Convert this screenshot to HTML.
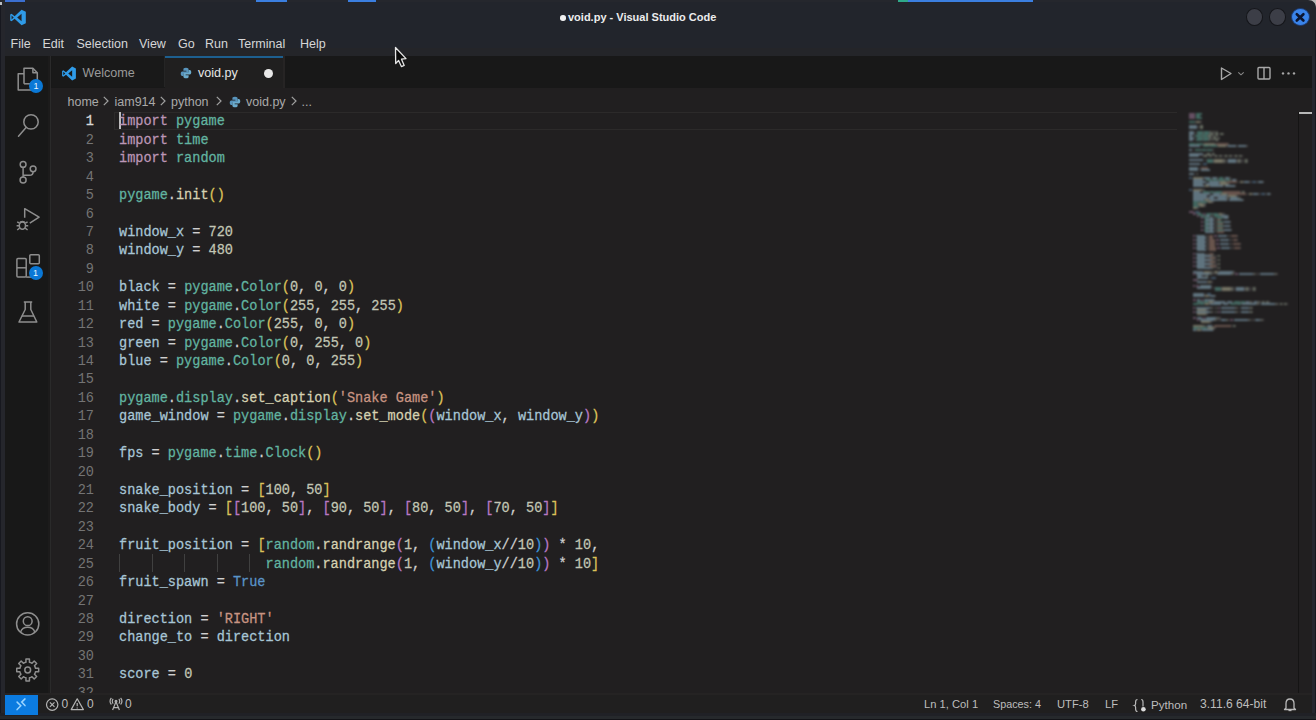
<!DOCTYPE html>
<html><head><meta charset="utf-8">
<style>
*{margin:0;padding:0;box-sizing:border-box}
html,body{width:1316px;height:720px;overflow:hidden;background:#1b1c22}
body{position:relative;font-family:"Liberation Sans",sans-serif;color:#ccc}
.abs{position:absolute}
.code{position:absolute;left:119px;font-family:"Liberation Mono",monospace;font-size:13.57px;white-space:pre;color:#cfcfcf;height:18.43px;line-height:18.43px;transform-origin:0 13px;transform:translateY(2.3px) scaleY(1.1);-webkit-text-stroke:0.25px currentColor}
.ln{position:absolute;left:56px;width:38px;text-align:right;font-family:"Liberation Mono",monospace;font-size:13.57px;color:#747474;height:18.43px;line-height:18.43px;transform-origin:0 13px;transform:translateY(2.3px) scaleY(1.1)}
.ln.cur{color:#d8d8d8;-webkit-text-stroke:0.3px currentColor}
.k{color:#bc96b6}.m{color:#62b4a0}.v{color:#a8c6d6}.n{color:#c2c6b4}.s{color:#c89482}.f{color:#d6d2b2}
.b1{color:#dcc25a}.b2{color:#b878c4}.b3{color:#3c94d8}.c{color:#5a94c8}
.mi{position:absolute;top:36px;font-size:12.5px;color:#d6d6d6;line-height:16px}
.bc{position:absolute;top:94px;font-size:12.5px;color:#a9a9a9;line-height:16px}
.st{position:absolute;top:697px;font-size:12px;color:#bdbdbd;line-height:15px}
.sep{position:absolute;top:93px;font-size:12.5px;color:#a9a9a9;line-height:16px}
</style></head><body>
<!-- desktop top strip -->
<div class="abs" style="left:0;top:0;width:1316px;height:2px;background:#25272d"></div>
<div class="abs" style="left:256px;top:0;width:31px;height:2px;background:#3b7fe0"></div><div class="abs" style="left:5px;top:0;width:20px;height:2px;background:#3b6fd0"></div>
<div class="abs" style="left:348px;top:0;width:28px;height:2px;background:#3b7fe0"></div>
<div class="abs" style="left:898px;top:0;width:10px;height:2px;background:#2fa98a"></div>
<div class="abs" style="left:908px;top:0;width:125px;height:2px;background:#3b7fe0"></div>

<!-- window titlebar + menubar -->
<div class="abs" style="left:0;top:2px;width:1316px;height:54px;background:#22252c"></div>
<div class="abs" style="left:0;top:48px;width:1316px;height:8px;background:#242529"></div>
<!-- left window border -->
<div class="abs" style="left:0;top:2px;width:1px;height:718px;background:#17181f"></div>
<div class="abs" style="left:1px;top:2px;width:4px;height:718px;background:#25262c"></div>
<!-- right window border -->
<div class="abs" style="left:1312px;top:56px;width:4px;height:664px;background:#25262e"></div><div class="abs" style="left:1314.5px;top:30px;width:1.5px;height:690px;background:#16171e"></div>

<!-- vscode logo -->
<svg class="abs" style="left:9px;top:9px" width="18" height="17" viewBox="0 0 100 100">
<path d="M71 4 L96 16 V84 L71 96 L30 58 L12 72 L4 67 V33 L12 28 L30 42 Z M71 28 L45 50 L71 72 Z M12 38 V62 L25 50 Z" fill="#2f9be8" fill-rule="evenodd"/>
</svg>
<div class="abs" style="left:560px;top:15px;width:5.5px;height:5.5px;border-radius:50%;background:#f0f0f0"></div>
<div class="abs" style="left:568px;top:10px;font-size:11px;font-weight:bold;color:#ececec;line-height:14px">void.py - Visual Studio Code</div>
<!-- window buttons -->
<div class="abs" style="left:1245.5px;top:8px;width:17px;height:17.5px;border-radius:50%;background:#3c3e47;border:1.6px solid #15161a"></div>
<div class="abs" style="left:1268.5px;top:8px;width:17px;height:17.5px;border-radius:50%;background:#3c3e47;border:1.6px solid #15161a"></div>
<div class="abs" style="left:1290.5px;top:7.8px;width:19.5px;height:18.5px;border-radius:50%;background:#3a84ea;border:1px solid #1c3a70"></div>
<svg class="abs" style="left:1290px;top:7px" width="20" height="20" viewBox="0 0 20 20"><path d="M6.8 7.2 L13.4 13.5 M13.4 7.2 L6.8 13.5" stroke="#0b1530" stroke-width="2.6" stroke-linecap="round"/></svg>
<svg class="abs" style="left:1306px;top:0" width="10" height="10" viewBox="0 0 10 10"><path d="M2 0 H10 V8 C10 3 7 0 2 0 Z" fill="#b8b8b8"/></svg>

<div class="mi" style="left:10.5px">File</div>
<div class="mi" style="left:42.5px">Edit</div>
<div class="mi" style="left:76.5px">Selection</div>
<div class="mi" style="left:139px">View</div>
<div class="mi" style="left:178px">Go</div>
<div class="mi" style="left:205px">Run</div>
<div class="mi" style="left:238px">Terminal</div>
<div class="mi" style="left:300px">Help</div>



<!-- activity bar -->
<div class="abs" style="left:5px;top:56px;width:43px;height:639px;background:#181818"></div>
<div class="abs" style="left:48px;top:56px;width:3px;height:639px;background:#1c1b1b"></div>
<div class="abs" style="left:50px;top:56px;width:1px;height:639px;background:#2a2a2a"></div>

<!-- explorer icon -->
<svg class="abs" style="left:14px;top:64px" width="30" height="30" viewBox="0 0 30 30" fill="none" stroke="#8e8e8e" stroke-width="1.5" stroke-linejoin="round">
<path d="M10 19.8 V4.2 H18.9 L23.3 8.7 V17"/><path d="M18.9 4.2 V8.7 H23.3"/><path d="M10 9.8 H4.2 V26 H17"/><path d="M10 19.8 H16"/>
</svg>
<div class="abs" style="left:29px;top:79px;width:14px;height:14px;border-radius:50%;background:#0a78d6;color:#e8f4ff;font-size:9px;text-align:center;line-height:14px">1</div>
<!-- search icon -->
<svg class="abs" style="left:14px;top:108px" width="30" height="30" viewBox="0 0 30 30" fill="none" stroke="#8e8e8e" stroke-width="1.5">
<circle cx="17" cy="13.9" r="7.2"/><path d="M12.3 19.3 L4.5 28.2" stroke-linecap="round"/>
</svg>
<!-- source control icon -->
<svg class="abs" style="left:14px;top:156px" width="30" height="30" viewBox="0 0 30 30" fill="none" stroke="#8e8e8e" stroke-width="1.5">
<circle cx="9.1" cy="8.4" r="2.9"/><circle cx="9.1" cy="24" r="3"/><circle cx="19.1" cy="12.8" r="2.9"/><path d="M9.1 11.3 V21"/><path d="M19.1 15.7 V16 C19.1 18.2 17.8 19.3 15.5 19.3 H9.1"/>
</svg>
<!-- run & debug icon -->
<svg class="abs" style="left:14px;top:202px" width="30" height="30" viewBox="0 0 30 30" fill="none" stroke="#8e8e8e" stroke-width="1.5" stroke-linejoin="round">
<path d="M10.7 15.8 V6.7 L25.1 15.1 L15.8 21.1"/>
<ellipse cx="8.4" cy="23.6" rx="3.1" ry="3.6"/><path d="M5.8 20.5 C6.5 19 10.3 19 11 20.5"/>
<path d="M3.2 19.8 L5.5 21.2 M2.6 23.8 H5.2 M3.2 28 L5.6 26.2 M13.6 19.8 L11.3 21.2 M14.2 23.8 H11.6 M13.6 28 L11.2 26.2"/>
</svg>
<!-- extensions icon -->
<svg class="abs" style="left:14px;top:251px" width="30" height="30" viewBox="0 0 30 30" fill="none" stroke="#8e8e8e" stroke-width="1.5">
<rect x="2.9" y="7.4" width="9.3" height="18.7" rx="1"/><path d="M2.9 16.8 H12.2"/><path d="M12.2 26.1 H17"/><rect x="15.8" y="3.7" width="9.5" height="9.1" rx="1"/>
</svg>
<div class="abs" style="left:28.6px;top:265.7px;width:14px;height:14px;border-radius:50%;background:#0a78d6;color:#e8f4ff;font-size:9px;text-align:center;line-height:14px">1</div>
<!-- testing flask icon -->
<svg class="abs" style="left:14px;top:297px" width="30" height="30" viewBox="0 0 30 30" fill="none" stroke="#8e8e8e" stroke-width="1.5" stroke-linejoin="round">
<path d="M9.8 5 H18.2"/><path d="M11.2 5 V12.5 L5 25 H22.8 L16.8 12.5 V5"/><path d="M7.8 19 H20"/>
</svg>
<!-- account icon -->
<svg class="abs" style="left:13px;top:609px" width="30" height="30" viewBox="0 0 30 30" fill="none" stroke="#8e8e8e" stroke-width="1.5">
<circle cx="14.7" cy="14.9" r="11.1"/><circle cx="14.7" cy="12.2" r="4.4"/><path d="M7.6 23 C8.8 19.4 11.5 18.3 14.7 18.3 C17.9 18.3 20.6 19.4 21.8 23"/>
</svg>
<!-- settings gear icon -->
<svg class="abs" style="left:13px;top:655px" width="30" height="30" viewBox="0 0 30 30" fill="none" stroke="#8e8e8e" stroke-width="1.5">
<path d="M22.09 11.94 L22.51 13.25 L25.66 13.26 L25.66 16.74 L22.51 16.75 L22.09 18.06 L21.45 19.29 L23.68 21.52 L21.22 23.98 L18.99 21.75 L17.76 22.39 L16.45 22.81 L16.44 25.96 L12.96 25.96 L12.95 22.81 L11.64 22.39 L10.41 21.75 L8.18 23.98 L5.72 21.52 L7.95 19.29 L7.31 18.06 L6.89 16.75 L3.74 16.74 L3.74 13.26 L6.89 13.25 L7.31 11.94 L7.95 10.71 L5.72 8.48 L8.18 6.02 L10.41 8.25 L11.64 7.61 L12.95 7.19 L12.96 4.04 L16.44 4.04 L16.45 7.19 L17.76 7.61 L18.99 8.25 L21.22 6.02 L23.68 8.48 L21.45 10.71 Z" stroke-linejoin="round"/>
<circle cx="14.7" cy="15" r="2.9"/>
</svg>

<!-- tab bar -->
<div class="abs" style="left:51px;top:56px;width:1261px;height:32px;background:#181818"></div>

<!-- welcome tab -->
<div class="abs" style="left:52px;top:56px;width:113px;height:31px;background:#191919;border-right:1px solid #252525"></div>
<svg class="abs" style="left:61px;top:66px" width="16" height="15" viewBox="0 0 100 100">
<path d="M71 4 L96 16 V84 L71 96 L30 58 L12 72 L4 67 V33 L12 28 L30 42 Z M71 28 L45 50 L71 72 Z M12 38 V62 L25 50 Z" fill="#2f9be8" fill-rule="evenodd"/>
</svg>
<div class="abs" style="left:82.5px;top:65px;font-size:12.6px;color:#9a9a9a;line-height:16px">Welcome</div>
<!-- void.py tab (active) -->
<div class="abs" style="left:165px;top:56px;width:120px;height:32px;background:#201f1f;border-right:2px solid #262424"></div>
<div class="abs" style="left:165px;top:56px;width:118px;height:1.5px;background:#1d5f8f"></div>
<svg class="abs" style="left:180px;top:67px" width="12" height="12" viewBox="0 0 16 16">
<path d="M8 1 C5 1 4.5 2 4.5 3.5 V5 H8.5 V6 H3 C1.5 6 1 7.5 1 9 C1 10.5 1.5 12 3 12 H4.5 V10 C4.5 8.8 5.3 8 6.5 8 H10 C11 8 11.5 7.3 11.5 6.5 V3.5 C11.5 2 10.5 1 8 1 Z" fill="#5894bc"/>
<path d="M8 15 C11 15 11.5 14 11.5 12.5 V11 H7.5 V10 H13 C14.5 10 15 8.5 15 7 C15 5.5 14.5 4 13 4 H11.5 V6 C11.5 7.2 10.7 8 9.5 8 H6 C5 8 4.5 8.7 4.5 9.5 V12.5 C4.5 14 5.5 15 8 15 Z" fill="#6cabcc"/>
</svg>
<div class="abs" style="left:198px;top:65px;font-size:12.6px;color:#e6e6e6;line-height:16px">void.py</div>
<div class="abs" style="left:263.5px;top:68.5px;width:9px;height:9px;border-radius:50%;background:#e8e8e8"></div>

<!-- editor actions -->
<svg class="abs" style="left:1216px;top:64px" width="90" height="20" viewBox="0 0 90 20" fill="none" stroke="#a8a8a8" stroke-width="1.4">
<path d="M5.5 4 L15 9.5 L5.5 15.5 Z" stroke-linejoin="round"/>
<path d="M22.3 8.3 L25 10.8 L27.7 8.3" stroke-width="1.1" stroke="#8a8a8a"/>
<rect x="42" y="3.5" width="12" height="11.5" rx="1"/><path d="M48 3.5 V15"/>
<circle cx="67" cy="9.4" r="1.2" fill="#a8a8a8" stroke="none"/><circle cx="72.5" cy="9.4" r="1.2" fill="#a8a8a8" stroke="none"/><circle cx="78" cy="9.4" r="1.2" fill="#a8a8a8" stroke="none"/>
</svg>

<!-- editor -->
<div class="abs" style="left:51px;top:88px;width:1261px;height:607px;background:#211f20"></div>
<!-- breadcrumbs -->
<div class="bc" style="left:67.5px">home</div>
<svg class="abs" style="left:102px;top:95px" width="8" height="12" viewBox="0 0 8 12" fill="none" stroke="#a0a0a0" stroke-width="1.2"><path d="M1.8 1.8 L6 6 L1.8 10.2"/></svg>
<div class="bc" style="left:114.5px">iam914</div>
<svg class="abs" style="left:159px;top:95px" width="8" height="12" viewBox="0 0 8 12" fill="none" stroke="#a0a0a0" stroke-width="1.2"><path d="M1.8 1.8 L6 6 L1.8 10.2"/></svg>
<div class="bc" style="left:171px">python</div>
<svg class="abs" style="left:215px;top:95px" width="8" height="12" viewBox="0 0 8 12" fill="none" stroke="#a0a0a0" stroke-width="1.2"><path d="M1.8 1.8 L6 6 L1.8 10.2"/></svg>
<svg class="abs" style="left:229px;top:95.5px" width="12" height="12" viewBox="0 0 16 16">
<path d="M8 1 C5 1 4.5 2 4.5 3.5 V5 H8.5 V6 H3 C1.5 6 1 7.5 1 9 C1 10.5 1.5 12 3 12 H4.5 V10 C4.5 8.8 5.3 8 6.5 8 H10 C11 8 11.5 7.3 11.5 6.5 V3.5 C11.5 2 10.5 1 8 1 Z" fill="#5894bc"/>
<path d="M8 15 C11 15 11.5 14 11.5 12.5 V11 H7.5 V10 H13 C14.5 10 15 8.5 15 7 C15 5.5 14.5 4 13 4 H11.5 V6 C11.5 7.2 10.7 8 9.5 8 H6 C5 8 4.5 8.7 4.5 9.5 V12.5 C4.5 14 5.5 15 8 15 Z" fill="#6cabcc"/>
</svg>
<div class="bc" style="left:246px">void.py</div>
<svg class="abs" style="left:290px;top:95px" width="8" height="12" viewBox="0 0 8 12" fill="none" stroke="#a0a0a0" stroke-width="1.2"><path d="M1.8 1.8 L6 6 L1.8 10.2"/></svg>
<div class="bc" style="left:301.5px">...</div>

<!-- current line border -->
<div class="abs" style="left:114px;top:111.5px;width:1063px;height:18.5px;border:1px solid #2c2a2a;border-right:none"></div>
<!-- cursor -->
<div class="abs" style="left:119px;top:112px;width:2px;height:17px;background:#bdbdbd"></div>

<div class="ln cur" style="top:111.40px">1</div>
<div class="code" style="top:111.40px"><span class="k">import</span> <span class="m">pygame</span></div>
<div class="ln" style="top:129.83px">2</div>
<div class="code" style="top:129.83px"><span class="k">import</span> <span class="m">time</span></div>
<div class="ln" style="top:148.26px">3</div>
<div class="code" style="top:148.26px"><span class="k">import</span> <span class="m">random</span></div>
<div class="ln" style="top:166.69px">4</div>
<div class="ln" style="top:185.12px">5</div>
<div class="code" style="top:185.12px"><span class="m">pygame</span>.<span class="f">init</span><span class="b1">()</span></div>
<div class="ln" style="top:203.55px">6</div>
<div class="ln" style="top:221.98px">7</div>
<div class="code" style="top:221.98px"><span class="v">window_x</span> = <span class="n">720</span></div>
<div class="ln" style="top:240.41px">8</div>
<div class="code" style="top:240.41px"><span class="v">window_y</span> = <span class="n">480</span></div>
<div class="ln" style="top:258.84px">9</div>
<div class="ln" style="top:277.27px">10</div>
<div class="code" style="top:277.27px"><span class="v">black</span> = <span class="m">pygame</span>.<span class="m">Color</span><span class="b1">(</span><span class="n">0</span>, <span class="n">0</span>, <span class="n">0</span><span class="b1">)</span></div>
<div class="ln" style="top:295.70px">11</div>
<div class="code" style="top:295.70px"><span class="v">white</span> = <span class="m">pygame</span>.<span class="m">Color</span><span class="b1">(</span><span class="n">255</span>, <span class="n">255</span>, <span class="n">255</span><span class="b1">)</span></div>
<div class="ln" style="top:314.13px">12</div>
<div class="code" style="top:314.13px"><span class="v">red</span> = <span class="m">pygame</span>.<span class="m">Color</span><span class="b1">(</span><span class="n">255</span>, <span class="n">0</span>, <span class="n">0</span><span class="b1">)</span></div>
<div class="ln" style="top:332.56px">13</div>
<div class="code" style="top:332.56px"><span class="v">green</span> = <span class="m">pygame</span>.<span class="m">Color</span><span class="b1">(</span><span class="n">0</span>, <span class="n">255</span>, <span class="n">0</span><span class="b1">)</span></div>
<div class="ln" style="top:350.99px">14</div>
<div class="code" style="top:350.99px"><span class="v">blue</span> = <span class="m">pygame</span>.<span class="m">Color</span><span class="b1">(</span><span class="n">0</span>, <span class="n">0</span>, <span class="n">255</span><span class="b1">)</span></div>
<div class="ln" style="top:369.42px">15</div>
<div class="ln" style="top:387.85px">16</div>
<div class="code" style="top:387.85px"><span class="m">pygame</span>.<span class="m">display</span>.<span class="f">set_caption</span><span class="b1">(</span><span class="s">&#x27;Snake Game&#x27;</span><span class="b1">)</span></div>
<div class="ln" style="top:406.28px">17</div>
<div class="code" style="top:406.28px"><span class="v">game_window</span> = <span class="m">pygame</span>.<span class="m">display</span>.<span class="f">set_mode</span><span class="b1">(</span><span class="b2">(</span><span class="v">window_x</span>, <span class="v">window_y</span><span class="b2">)</span><span class="b1">)</span></div>
<div class="ln" style="top:424.71px">18</div>
<div class="ln" style="top:443.14px">19</div>
<div class="code" style="top:443.14px"><span class="v">fps</span> = <span class="m">pygame</span>.<span class="m">time</span>.<span class="m">Clock</span><span class="b1">()</span></div>
<div class="ln" style="top:461.57px">20</div>
<div class="ln" style="top:480.00px">21</div>
<div class="code" style="top:480.00px"><span class="v">snake_position</span> = <span class="b1">[</span><span class="n">100</span>, <span class="n">50</span><span class="b1">]</span></div>
<div class="ln" style="top:498.43px">22</div>
<div class="code" style="top:498.43px"><span class="v">snake_body</span> = <span class="b1">[</span><span class="b2">[</span><span class="n">100</span>, <span class="n">50</span><span class="b2">]</span>, <span class="b2">[</span><span class="n">90</span>, <span class="n">50</span><span class="b2">]</span>, <span class="b2">[</span><span class="n">80</span>, <span class="n">50</span><span class="b2">]</span>, <span class="b2">[</span><span class="n">70</span>, <span class="n">50</span><span class="b2">]</span><span class="b1">]</span></div>
<div class="ln" style="top:516.86px">23</div>
<div class="ln" style="top:535.29px">24</div>
<div class="code" style="top:535.29px"><span class="v">fruit_position</span> = <span class="b1">[</span><span class="m">random</span>.<span class="f">randrange</span><span class="b2">(</span><span class="n">1</span>, <span class="b3">(</span><span class="v">window_x</span>//<span class="n">10</span><span class="b3">)</span><span class="b2">)</span> * <span class="n">10</span>,</div>
<div class="ln" style="top:553.72px">25</div>
<div class="code" style="top:553.72px">                  <span class="m">random</span>.<span class="f">randrange</span><span class="b2">(</span><span class="n">1</span>, <span class="b3">(</span><span class="v">window_y</span>//<span class="n">10</span><span class="b3">)</span><span class="b2">)</span> * <span class="n">10</span><span class="b1">]</span></div>
<div class="ln" style="top:572.15px">26</div>
<div class="code" style="top:572.15px"><span class="v">fruit_spawn</span> = <span class="c">True</span></div>
<div class="ln" style="top:590.58px">27</div>
<div class="ln" style="top:609.01px">28</div>
<div class="code" style="top:609.01px"><span class="v">direction</span> = <span class="s">&#x27;RIGHT&#x27;</span></div>
<div class="ln" style="top:627.44px">29</div>
<div class="code" style="top:627.44px"><span class="v">change_to</span> = <span class="v">direction</span></div>
<div class="ln" style="top:645.87px">30</div>
<div class="ln" style="top:664.30px">31</div>
<div class="code" style="top:664.30px"><span class="v">score</span> = <span class="n">0</span></div>
<div class="ln" style="top:682.73px">32</div><div class="abs" style="left:119.0px;top:553.7px;width:1px;height:18.4px;background:#404040"></div><div class="abs" style="left:151.6px;top:553.7px;width:1px;height:18.4px;background:#404040"></div><div class="abs" style="left:184.1px;top:553.7px;width:1px;height:18.4px;background:#404040"></div><div class="abs" style="left:216.7px;top:553.7px;width:1px;height:18.4px;background:#404040"></div><div class="abs" style="left:249.2px;top:553.7px;width:1px;height:18.4px;background:#404040"></div>

<div class="abs" style="left:1189px;top:112.5px;width:108px;height:232px;opacity:0.45;filter:blur(0.8px) saturate(0.7)"><svg width="108" height="232" viewBox="0 0 108 232"><rect x="0" y="0" width="6" height="2" fill="#c586c0"/><rect x="7" y="0" width="6" height="2" fill="#4ec9b0"/><rect x="0" y="2" width="6" height="2" fill="#c586c0"/><rect x="7" y="2" width="4" height="2" fill="#4ec9b0"/><rect x="0" y="4" width="6" height="2" fill="#c586c0"/><rect x="7" y="4" width="6" height="2" fill="#4ec9b0"/><rect x="0" y="8" width="6" height="2" fill="#4ec9b0"/><rect x="6.25" y="8" width="0.5" height="2" fill="#d4d4d4"/><rect x="7" y="8" width="4" height="2" fill="#dcdcaa"/><rect x="11.25" y="8" width="0.5" height="2" fill="#d4d4d4"/><rect x="12.25" y="8" width="0.5" height="2" fill="#d4d4d4"/><rect x="0" y="12" width="8" height="2" fill="#9cdcfe"/><rect x="9.25" y="12" width="0.5" height="2" fill="#d4d4d4"/><rect x="11" y="12" width="3" height="2" fill="#b5cea8"/><rect x="0" y="14" width="8" height="2" fill="#9cdcfe"/><rect x="9.25" y="14" width="0.5" height="2" fill="#d4d4d4"/><rect x="11" y="14" width="3" height="2" fill="#b5cea8"/><rect x="0" y="18" width="5" height="2" fill="#9cdcfe"/><rect x="6.25" y="18" width="0.5" height="2" fill="#d4d4d4"/><rect x="8" y="18" width="6" height="2" fill="#4ec9b0"/><rect x="14.25" y="18" width="0.5" height="2" fill="#d4d4d4"/><rect x="15" y="18" width="5" height="2" fill="#4ec9b0"/><rect x="20.25" y="18" width="0.5" height="2" fill="#d4d4d4"/><rect x="21" y="18" width="1" height="2" fill="#b5cea8"/><rect x="22.25" y="18" width="0.5" height="2" fill="#d4d4d4"/><rect x="24" y="18" width="1" height="2" fill="#b5cea8"/><rect x="25.25" y="18" width="0.5" height="2" fill="#d4d4d4"/><rect x="27" y="18" width="1" height="2" fill="#b5cea8"/><rect x="28.25" y="18" width="0.5" height="2" fill="#d4d4d4"/><rect x="0" y="20" width="5" height="2" fill="#9cdcfe"/><rect x="6.25" y="20" width="0.5" height="2" fill="#d4d4d4"/><rect x="8" y="20" width="6" height="2" fill="#4ec9b0"/><rect x="14.25" y="20" width="0.5" height="2" fill="#d4d4d4"/><rect x="15" y="20" width="5" height="2" fill="#4ec9b0"/><rect x="20.25" y="20" width="0.5" height="2" fill="#d4d4d4"/><rect x="21" y="20" width="3" height="2" fill="#b5cea8"/><rect x="24.25" y="20" width="0.5" height="2" fill="#d4d4d4"/><rect x="26" y="20" width="3" height="2" fill="#b5cea8"/><rect x="29.25" y="20" width="0.5" height="2" fill="#d4d4d4"/><rect x="31" y="20" width="3" height="2" fill="#b5cea8"/><rect x="34.25" y="20" width="0.5" height="2" fill="#d4d4d4"/><rect x="0" y="22" width="3" height="2" fill="#9cdcfe"/><rect x="4.25" y="22" width="0.5" height="2" fill="#d4d4d4"/><rect x="6" y="22" width="6" height="2" fill="#4ec9b0"/><rect x="12.25" y="22" width="0.5" height="2" fill="#d4d4d4"/><rect x="13" y="22" width="5" height="2" fill="#4ec9b0"/><rect x="18.25" y="22" width="0.5" height="2" fill="#d4d4d4"/><rect x="19" y="22" width="3" height="2" fill="#b5cea8"/><rect x="22.25" y="22" width="0.5" height="2" fill="#d4d4d4"/><rect x="24" y="22" width="1" height="2" fill="#b5cea8"/><rect x="25.25" y="22" width="0.5" height="2" fill="#d4d4d4"/><rect x="27" y="22" width="1" height="2" fill="#b5cea8"/><rect x="28.25" y="22" width="0.5" height="2" fill="#d4d4d4"/><rect x="0" y="24" width="5" height="2" fill="#9cdcfe"/><rect x="6.25" y="24" width="0.5" height="2" fill="#d4d4d4"/><rect x="8" y="24" width="6" height="2" fill="#4ec9b0"/><rect x="14.25" y="24" width="0.5" height="2" fill="#d4d4d4"/><rect x="15" y="24" width="5" height="2" fill="#4ec9b0"/><rect x="20.25" y="24" width="0.5" height="2" fill="#d4d4d4"/><rect x="21" y="24" width="1" height="2" fill="#b5cea8"/><rect x="22.25" y="24" width="0.5" height="2" fill="#d4d4d4"/><rect x="24" y="24" width="3" height="2" fill="#b5cea8"/><rect x="27.25" y="24" width="0.5" height="2" fill="#d4d4d4"/><rect x="29" y="24" width="1" height="2" fill="#b5cea8"/><rect x="30.25" y="24" width="0.5" height="2" fill="#d4d4d4"/><rect x="0" y="26" width="4" height="2" fill="#9cdcfe"/><rect x="5.25" y="26" width="0.5" height="2" fill="#d4d4d4"/><rect x="7" y="26" width="6" height="2" fill="#4ec9b0"/><rect x="13.25" y="26" width="0.5" height="2" fill="#d4d4d4"/><rect x="14" y="26" width="5" height="2" fill="#4ec9b0"/><rect x="19.25" y="26" width="0.5" height="2" fill="#d4d4d4"/><rect x="20" y="26" width="1" height="2" fill="#b5cea8"/><rect x="21.25" y="26" width="0.5" height="2" fill="#d4d4d4"/><rect x="23" y="26" width="1" height="2" fill="#b5cea8"/><rect x="24.25" y="26" width="0.5" height="2" fill="#d4d4d4"/><rect x="26" y="26" width="3" height="2" fill="#b5cea8"/><rect x="29.25" y="26" width="0.5" height="2" fill="#d4d4d4"/><rect x="0" y="30" width="6" height="2" fill="#4ec9b0"/><rect x="6.25" y="30" width="0.5" height="2" fill="#d4d4d4"/><rect x="7" y="30" width="7" height="2" fill="#4ec9b0"/><rect x="14.25" y="30" width="0.5" height="2" fill="#d4d4d4"/><rect x="15" y="30" width="11" height="2" fill="#dcdcaa"/><rect x="26.25" y="30" width="0.5" height="2" fill="#d4d4d4"/><rect x="27" y="30" width="12" height="2" fill="#ce9178"/><rect x="39.25" y="30" width="0.5" height="2" fill="#d4d4d4"/><rect x="0" y="32" width="11" height="2" fill="#9cdcfe"/><rect x="12.25" y="32" width="0.5" height="2" fill="#d4d4d4"/><rect x="14" y="32" width="6" height="2" fill="#4ec9b0"/><rect x="20.25" y="32" width="0.5" height="2" fill="#d4d4d4"/><rect x="21" y="32" width="7" height="2" fill="#4ec9b0"/><rect x="28.25" y="32" width="0.5" height="2" fill="#d4d4d4"/><rect x="29" y="32" width="8" height="2" fill="#dcdcaa"/><rect x="37.25" y="32" width="0.5" height="2" fill="#d4d4d4"/><rect x="38.25" y="32" width="0.5" height="2" fill="#d4d4d4"/><rect x="39" y="32" width="8" height="2" fill="#9cdcfe"/><rect x="47.25" y="32" width="0.5" height="2" fill="#d4d4d4"/><rect x="49" y="32" width="8" height="2" fill="#9cdcfe"/><rect x="57.25" y="32" width="0.5" height="2" fill="#d4d4d4"/><rect x="58.25" y="32" width="0.5" height="2" fill="#d4d4d4"/><rect x="0" y="36" width="3" height="2" fill="#9cdcfe"/><rect x="4.25" y="36" width="0.5" height="2" fill="#d4d4d4"/><rect x="6" y="36" width="6" height="2" fill="#4ec9b0"/><rect x="12.25" y="36" width="0.5" height="2" fill="#d4d4d4"/><rect x="13" y="36" width="4" height="2" fill="#4ec9b0"/><rect x="17.25" y="36" width="0.5" height="2" fill="#d4d4d4"/><rect x="18" y="36" width="5" height="2" fill="#4ec9b0"/><rect x="23.25" y="36" width="0.5" height="2" fill="#d4d4d4"/><rect x="24.25" y="36" width="0.5" height="2" fill="#d4d4d4"/><rect x="0" y="40" width="14" height="2" fill="#9cdcfe"/><rect x="15.25" y="40" width="0.5" height="2" fill="#d4d4d4"/><rect x="17.25" y="40" width="0.5" height="2" fill="#d4d4d4"/><rect x="18" y="40" width="3" height="2" fill="#b5cea8"/><rect x="21.25" y="40" width="0.5" height="2" fill="#d4d4d4"/><rect x="23" y="40" width="2" height="2" fill="#b5cea8"/><rect x="25.25" y="40" width="0.5" height="2" fill="#d4d4d4"/><rect x="0" y="42" width="10" height="2" fill="#9cdcfe"/><rect x="11.25" y="42" width="0.5" height="2" fill="#d4d4d4"/><rect x="13.25" y="42" width="0.5" height="2" fill="#d4d4d4"/><rect x="14.25" y="42" width="0.5" height="2" fill="#d4d4d4"/><rect x="15" y="42" width="3" height="2" fill="#b5cea8"/><rect x="18.25" y="42" width="0.5" height="2" fill="#d4d4d4"/><rect x="20" y="42" width="2" height="2" fill="#b5cea8"/><rect x="22.25" y="42" width="0.5" height="2" fill="#d4d4d4"/><rect x="23.25" y="42" width="0.5" height="2" fill="#d4d4d4"/><rect x="25.25" y="42" width="0.5" height="2" fill="#d4d4d4"/><rect x="26" y="42" width="2" height="2" fill="#b5cea8"/><rect x="28.25" y="42" width="0.5" height="2" fill="#d4d4d4"/><rect x="30" y="42" width="2" height="2" fill="#b5cea8"/><rect x="32.25" y="42" width="0.5" height="2" fill="#d4d4d4"/><rect x="33.25" y="42" width="0.5" height="2" fill="#d4d4d4"/><rect x="35.25" y="42" width="0.5" height="2" fill="#d4d4d4"/><rect x="36" y="42" width="2" height="2" fill="#b5cea8"/><rect x="38.25" y="42" width="0.5" height="2" fill="#d4d4d4"/><rect x="40" y="42" width="2" height="2" fill="#b5cea8"/><rect x="42.25" y="42" width="0.5" height="2" fill="#d4d4d4"/><rect x="43.25" y="42" width="0.5" height="2" fill="#d4d4d4"/><rect x="45.25" y="42" width="0.5" height="2" fill="#d4d4d4"/><rect x="46" y="42" width="2" height="2" fill="#b5cea8"/><rect x="48.25" y="42" width="0.5" height="2" fill="#d4d4d4"/><rect x="50" y="42" width="2" height="2" fill="#b5cea8"/><rect x="52.25" y="42" width="0.5" height="2" fill="#d4d4d4"/><rect x="53.25" y="42" width="0.5" height="2" fill="#d4d4d4"/><rect x="0" y="46" width="14" height="2" fill="#9cdcfe"/><rect x="15.25" y="46" width="0.5" height="2" fill="#d4d4d4"/><rect x="17.25" y="46" width="0.5" height="2" fill="#d4d4d4"/><rect x="18" y="46" width="6" height="2" fill="#4ec9b0"/><rect x="24.25" y="46" width="0.5" height="2" fill="#d4d4d4"/><rect x="25" y="46" width="9" height="2" fill="#dcdcaa"/><rect x="34.25" y="46" width="0.5" height="2" fill="#d4d4d4"/><rect x="35" y="46" width="1" height="2" fill="#b5cea8"/><rect x="36.25" y="46" width="0.5" height="2" fill="#d4d4d4"/><rect x="38.25" y="46" width="0.5" height="2" fill="#d4d4d4"/><rect x="39" y="46" width="8" height="2" fill="#9cdcfe"/><rect x="47.25" y="46" width="0.5" height="2" fill="#d4d4d4"/><rect x="48.25" y="46" width="0.5" height="2" fill="#d4d4d4"/><rect x="49" y="46" width="2" height="2" fill="#b5cea8"/><rect x="51.25" y="46" width="0.5" height="2" fill="#d4d4d4"/><rect x="52.25" y="46" width="0.5" height="2" fill="#d4d4d4"/><rect x="54.25" y="46" width="0.5" height="2" fill="#d4d4d4"/><rect x="56" y="46" width="2" height="2" fill="#b5cea8"/><rect x="58.25" y="46" width="0.5" height="2" fill="#d4d4d4"/><rect x="18" y="48" width="6" height="2" fill="#4ec9b0"/><rect x="24.25" y="48" width="0.5" height="2" fill="#d4d4d4"/><rect x="25" y="48" width="9" height="2" fill="#dcdcaa"/><rect x="34.25" y="48" width="0.5" height="2" fill="#d4d4d4"/><rect x="35" y="48" width="1" height="2" fill="#b5cea8"/><rect x="36.25" y="48" width="0.5" height="2" fill="#d4d4d4"/><rect x="38.25" y="48" width="0.5" height="2" fill="#d4d4d4"/><rect x="39" y="48" width="8" height="2" fill="#9cdcfe"/><rect x="47.25" y="48" width="0.5" height="2" fill="#d4d4d4"/><rect x="48.25" y="48" width="0.5" height="2" fill="#d4d4d4"/><rect x="49" y="48" width="2" height="2" fill="#b5cea8"/><rect x="51.25" y="48" width="0.5" height="2" fill="#d4d4d4"/><rect x="52.25" y="48" width="0.5" height="2" fill="#d4d4d4"/><rect x="54.25" y="48" width="0.5" height="2" fill="#d4d4d4"/><rect x="56" y="48" width="2" height="2" fill="#b5cea8"/><rect x="58.25" y="48" width="0.5" height="2" fill="#d4d4d4"/><rect x="0" y="50" width="11" height="2" fill="#9cdcfe"/><rect x="12.25" y="50" width="0.5" height="2" fill="#d4d4d4"/><rect x="14" y="50" width="4" height="2" fill="#569cd6"/><rect x="0" y="54" width="9" height="2" fill="#9cdcfe"/><rect x="10.25" y="54" width="0.5" height="2" fill="#d4d4d4"/><rect x="12" y="54" width="7" height="2" fill="#ce9178"/><rect x="0" y="56" width="9" height="2" fill="#9cdcfe"/><rect x="10.25" y="56" width="0.5" height="2" fill="#d4d4d4"/><rect x="12" y="56" width="9" height="2" fill="#9cdcfe"/><rect x="0" y="60" width="5" height="2" fill="#9cdcfe"/><rect x="6.25" y="60" width="0.5" height="2" fill="#d4d4d4"/><rect x="8" y="60" width="1" height="2" fill="#b5cea8"/><rect x="0" y="64" width="3" height="2" fill="#569cd6"/><rect x="4" y="64" width="10" height="2" fill="#dcdcaa"/><rect x="14.25" y="64" width="0.5" height="2" fill="#d4d4d4"/><rect x="15" y="64" width="6" height="2" fill="#9cdcfe"/><rect x="21.25" y="64" width="0.5" height="2" fill="#d4d4d4"/><rect x="23" y="64" width="5" height="2" fill="#9cdcfe"/><rect x="28.25" y="64" width="0.5" height="2" fill="#d4d4d4"/><rect x="30" y="64" width="4" height="2" fill="#4ec9b0"/><rect x="34.25" y="64" width="0.5" height="2" fill="#d4d4d4"/><rect x="36" y="64" width="4" height="2" fill="#9cdcfe"/><rect x="40.25" y="64" width="0.5" height="2" fill="#d4d4d4"/><rect x="41.25" y="64" width="0.5" height="2" fill="#d4d4d4"/><rect x="4" y="66" width="10" height="2" fill="#9cdcfe"/><rect x="15.25" y="66" width="0.5" height="2" fill="#d4d4d4"/><rect x="17" y="66" width="6" height="2" fill="#4ec9b0"/><rect x="23.25" y="66" width="0.5" height="2" fill="#d4d4d4"/><rect x="24" y="66" width="4" height="2" fill="#4ec9b0"/><rect x="28.25" y="66" width="0.5" height="2" fill="#d4d4d4"/><rect x="29" y="66" width="7" height="2" fill="#4ec9b0"/><rect x="36.25" y="66" width="0.5" height="2" fill="#d4d4d4"/><rect x="37" y="66" width="4" height="2" fill="#4ec9b0"/><rect x="41.25" y="66" width="0.5" height="2" fill="#d4d4d4"/><rect x="43" y="66" width="4" height="2" fill="#9cdcfe"/><rect x="47.25" y="66" width="0.5" height="2" fill="#d4d4d4"/><rect x="4" y="68" width="13" height="2" fill="#9cdcfe"/><rect x="18.25" y="68" width="0.5" height="2" fill="#d4d4d4"/><rect x="20" y="68" width="10" height="2" fill="#9cdcfe"/><rect x="30.25" y="68" width="0.5" height="2" fill="#d4d4d4"/><rect x="31" y="68" width="6" height="2" fill="#dcdcaa"/><rect x="37.25" y="68" width="0.5" height="2" fill="#d4d4d4"/><rect x="38" y="68" width="10" height="2" fill="#ce9178"/><rect x="49.25" y="68" width="0.5" height="2" fill="#d4d4d4"/><rect x="51" y="68" width="3" height="2" fill="#dcdcaa"/><rect x="54.25" y="68" width="0.5" height="2" fill="#d4d4d4"/><rect x="55" y="68" width="5" height="2" fill="#9cdcfe"/><rect x="60.25" y="68" width="0.5" height="2" fill="#d4d4d4"/><rect x="61.25" y="68" width="0.5" height="2" fill="#d4d4d4"/><rect x="63" y="68" width="4" height="2" fill="#569cd6"/><rect x="67.25" y="68" width="0.5" height="2" fill="#d4d4d4"/><rect x="69" y="68" width="5" height="2" fill="#9cdcfe"/><rect x="74.25" y="68" width="0.5" height="2" fill="#d4d4d4"/><rect x="4" y="70" width="10" height="2" fill="#9cdcfe"/><rect x="15.25" y="70" width="0.5" height="2" fill="#d4d4d4"/><rect x="17" y="70" width="13" height="2" fill="#9cdcfe"/><rect x="30.25" y="70" width="0.5" height="2" fill="#d4d4d4"/><rect x="31" y="70" width="8" height="2" fill="#dcdcaa"/><rect x="39.25" y="70" width="0.5" height="2" fill="#d4d4d4"/><rect x="40.25" y="70" width="0.5" height="2" fill="#d4d4d4"/><rect x="4" y="72" width="11" height="2" fill="#9cdcfe"/><rect x="15.25" y="72" width="0.5" height="2" fill="#d4d4d4"/><rect x="16" y="72" width="4" height="2" fill="#dcdcaa"/><rect x="20.25" y="72" width="0.5" height="2" fill="#d4d4d4"/><rect x="21" y="72" width="13" height="2" fill="#9cdcfe"/><rect x="34.25" y="72" width="0.5" height="2" fill="#d4d4d4"/><rect x="36" y="72" width="10" height="2" fill="#9cdcfe"/><rect x="46.25" y="72" width="0.5" height="2" fill="#d4d4d4"/><rect x="0" y="76" width="3" height="2" fill="#569cd6"/><rect x="4" y="76" width="9" height="2" fill="#dcdcaa"/><rect x="13.25" y="76" width="0.5" height="2" fill="#d4d4d4"/><rect x="14.25" y="76" width="0.5" height="2" fill="#d4d4d4"/><rect x="15.25" y="76" width="0.5" height="2" fill="#d4d4d4"/><rect x="4" y="78" width="7" height="2" fill="#9cdcfe"/><rect x="12.25" y="78" width="0.5" height="2" fill="#d4d4d4"/><rect x="14" y="78" width="6" height="2" fill="#4ec9b0"/><rect x="20.25" y="78" width="0.5" height="2" fill="#d4d4d4"/><rect x="21" y="78" width="4" height="2" fill="#4ec9b0"/><rect x="25.25" y="78" width="0.5" height="2" fill="#d4d4d4"/><rect x="26" y="78" width="7" height="2" fill="#4ec9b0"/><rect x="33.25" y="78" width="0.5" height="2" fill="#d4d4d4"/><rect x="34" y="78" width="17" height="2" fill="#ce9178"/><rect x="51.25" y="78" width="0.5" height="2" fill="#d4d4d4"/><rect x="53" y="78" width="2" height="2" fill="#b5cea8"/><rect x="55.25" y="78" width="0.5" height="2" fill="#d4d4d4"/><rect x="4" y="80" width="17" height="2" fill="#9cdcfe"/><rect x="22.25" y="80" width="0.5" height="2" fill="#d4d4d4"/><rect x="24" y="80" width="7" height="2" fill="#9cdcfe"/><rect x="31.25" y="80" width="0.5" height="2" fill="#d4d4d4"/><rect x="32" y="80" width="6" height="2" fill="#dcdcaa"/><rect x="38.25" y="80" width="0.5" height="2" fill="#d4d4d4"/><rect x="39" y="80" width="18" height="2" fill="#ce9178"/><rect x="58.25" y="80" width="0.5" height="2" fill="#d4d4d4"/><rect x="60" y="80" width="3" height="2" fill="#dcdcaa"/><rect x="63.25" y="80" width="0.5" height="2" fill="#d4d4d4"/><rect x="64" y="80" width="5" height="2" fill="#9cdcfe"/><rect x="69.25" y="80" width="0.5" height="2" fill="#d4d4d4"/><rect x="70.25" y="80" width="0.5" height="2" fill="#d4d4d4"/><rect x="72" y="80" width="4" height="2" fill="#569cd6"/><rect x="76.25" y="80" width="0.5" height="2" fill="#d4d4d4"/><rect x="78" y="80" width="3" height="2" fill="#9cdcfe"/><rect x="81.25" y="80" width="0.5" height="2" fill="#d4d4d4"/><rect x="4" y="82" width="14" height="2" fill="#9cdcfe"/><rect x="19.25" y="82" width="0.5" height="2" fill="#d4d4d4"/><rect x="21" y="82" width="17" height="2" fill="#9cdcfe"/><rect x="38.25" y="82" width="0.5" height="2" fill="#d4d4d4"/><rect x="39" y="82" width="8" height="2" fill="#dcdcaa"/><rect x="47.25" y="82" width="0.5" height="2" fill="#d4d4d4"/><rect x="48.25" y="82" width="0.5" height="2" fill="#d4d4d4"/><rect x="4" y="84" width="14" height="2" fill="#9cdcfe"/><rect x="18.25" y="84" width="0.5" height="2" fill="#d4d4d4"/><rect x="19" y="84" width="6" height="2" fill="#9cdcfe"/><rect x="26.25" y="84" width="0.5" height="2" fill="#d4d4d4"/><rect x="28.25" y="84" width="0.5" height="2" fill="#d4d4d4"/><rect x="29" y="84" width="8" height="2" fill="#9cdcfe"/><rect x="37.25" y="84" width="0.5" height="2" fill="#d4d4d4"/><rect x="38" y="84" width="1" height="2" fill="#b5cea8"/><rect x="39.25" y="84" width="0.5" height="2" fill="#d4d4d4"/><rect x="41" y="84" width="8" height="2" fill="#9cdcfe"/><rect x="49.25" y="84" width="0.5" height="2" fill="#d4d4d4"/><rect x="50" y="84" width="1" height="2" fill="#b5cea8"/><rect x="51.25" y="84" width="0.5" height="2" fill="#d4d4d4"/><rect x="4" y="86" width="11" height="2" fill="#9cdcfe"/><rect x="15.25" y="86" width="0.5" height="2" fill="#d4d4d4"/><rect x="16" y="86" width="4" height="2" fill="#dcdcaa"/><rect x="20.25" y="86" width="0.5" height="2" fill="#d4d4d4"/><rect x="21" y="86" width="17" height="2" fill="#9cdcfe"/><rect x="38.25" y="86" width="0.5" height="2" fill="#d4d4d4"/><rect x="40" y="86" width="14" height="2" fill="#9cdcfe"/><rect x="54.25" y="86" width="0.5" height="2" fill="#d4d4d4"/><rect x="4" y="88" width="6" height="2" fill="#4ec9b0"/><rect x="10.25" y="88" width="0.5" height="2" fill="#d4d4d4"/><rect x="11" y="88" width="7" height="2" fill="#4ec9b0"/><rect x="18.25" y="88" width="0.5" height="2" fill="#d4d4d4"/><rect x="19" y="88" width="4" height="2" fill="#dcdcaa"/><rect x="23.25" y="88" width="0.5" height="2" fill="#d4d4d4"/><rect x="24.25" y="88" width="0.5" height="2" fill="#d4d4d4"/><rect x="4" y="90" width="4" height="2" fill="#4ec9b0"/><rect x="8.25" y="90" width="0.5" height="2" fill="#d4d4d4"/><rect x="9" y="90" width="5" height="2" fill="#dcdcaa"/><rect x="14.25" y="90" width="0.5" height="2" fill="#d4d4d4"/><rect x="15" y="90" width="1" height="2" fill="#b5cea8"/><rect x="16.25" y="90" width="0.5" height="2" fill="#d4d4d4"/><rect x="4" y="92" width="6" height="2" fill="#4ec9b0"/><rect x="10.25" y="92" width="0.5" height="2" fill="#d4d4d4"/><rect x="11" y="92" width="4" height="2" fill="#dcdcaa"/><rect x="15.25" y="92" width="0.5" height="2" fill="#d4d4d4"/><rect x="16.25" y="92" width="0.5" height="2" fill="#d4d4d4"/><rect x="4" y="94" width="4" height="2" fill="#dcdcaa"/><rect x="8.25" y="94" width="0.5" height="2" fill="#d4d4d4"/><rect x="9.25" y="94" width="0.5" height="2" fill="#d4d4d4"/><rect x="0" y="98" width="5" height="2" fill="#c586c0"/><rect x="6" y="98" width="4" height="2" fill="#569cd6"/><rect x="10.25" y="98" width="0.5" height="2" fill="#d4d4d4"/><rect x="4" y="100" width="3" height="2" fill="#c586c0"/><rect x="8" y="100" width="5" height="2" fill="#4ec9b0"/><rect x="14" y="100" width="2" height="2" fill="#c586c0"/><rect x="17" y="100" width="6" height="2" fill="#4ec9b0"/><rect x="23.25" y="100" width="0.5" height="2" fill="#d4d4d4"/><rect x="24" y="100" width="5" height="2" fill="#4ec9b0"/><rect x="29.25" y="100" width="0.5" height="2" fill="#d4d4d4"/><rect x="30" y="100" width="3" height="2" fill="#dcdcaa"/><rect x="33.25" y="100" width="0.5" height="2" fill="#d4d4d4"/><rect x="34.25" y="100" width="0.5" height="2" fill="#d4d4d4"/><rect x="35.25" y="100" width="0.5" height="2" fill="#d4d4d4"/><rect x="8" y="102" width="2" height="2" fill="#c586c0"/><rect x="11" y="102" width="5" height="2" fill="#4ec9b0"/><rect x="16.25" y="102" width="0.5" height="2" fill="#d4d4d4"/><rect x="17" y="102" width="4" height="2" fill="#9cdcfe"/><rect x="22.25" y="102" width="0.5" height="2" fill="#d4d4d4"/><rect x="23.25" y="102" width="0.5" height="2" fill="#d4d4d4"/><rect x="25" y="102" width="6" height="2" fill="#4ec9b0"/><rect x="31.25" y="102" width="0.5" height="2" fill="#d4d4d4"/><rect x="32" y="102" width="7" height="2" fill="#9cdcfe"/><rect x="39.25" y="102" width="0.5" height="2" fill="#d4d4d4"/><rect x="12" y="104" width="2" height="2" fill="#c586c0"/><rect x="15" y="104" width="5" height="2" fill="#4ec9b0"/><rect x="20.25" y="104" width="0.5" height="2" fill="#d4d4d4"/><rect x="21" y="104" width="3" height="2" fill="#9cdcfe"/><rect x="25.25" y="104" width="0.5" height="2" fill="#d4d4d4"/><rect x="26.25" y="104" width="0.5" height="2" fill="#d4d4d4"/><rect x="28" y="104" width="6" height="2" fill="#4ec9b0"/><rect x="34.25" y="104" width="0.5" height="2" fill="#d4d4d4"/><rect x="35" y="104" width="4" height="2" fill="#9cdcfe"/><rect x="39.25" y="104" width="0.5" height="2" fill="#d4d4d4"/><rect x="16" y="106" width="9" height="2" fill="#9cdcfe"/><rect x="26.25" y="106" width="0.5" height="2" fill="#d4d4d4"/><rect x="28" y="106" width="4" height="2" fill="#ce9178"/><rect x="12" y="108" width="2" height="2" fill="#c586c0"/><rect x="15" y="108" width="5" height="2" fill="#4ec9b0"/><rect x="20.25" y="108" width="0.5" height="2" fill="#d4d4d4"/><rect x="21" y="108" width="3" height="2" fill="#9cdcfe"/><rect x="25.25" y="108" width="0.5" height="2" fill="#d4d4d4"/><rect x="26.25" y="108" width="0.5" height="2" fill="#d4d4d4"/><rect x="28" y="108" width="6" height="2" fill="#4ec9b0"/><rect x="34.25" y="108" width="0.5" height="2" fill="#d4d4d4"/><rect x="35" y="108" width="6" height="2" fill="#9cdcfe"/><rect x="41.25" y="108" width="0.5" height="2" fill="#d4d4d4"/><rect x="16" y="110" width="9" height="2" fill="#9cdcfe"/><rect x="26.25" y="110" width="0.5" height="2" fill="#d4d4d4"/><rect x="28" y="110" width="6" height="2" fill="#ce9178"/><rect x="12" y="112" width="2" height="2" fill="#c586c0"/><rect x="15" y="112" width="5" height="2" fill="#4ec9b0"/><rect x="20.25" y="112" width="0.5" height="2" fill="#d4d4d4"/><rect x="21" y="112" width="3" height="2" fill="#9cdcfe"/><rect x="25.25" y="112" width="0.5" height="2" fill="#d4d4d4"/><rect x="26.25" y="112" width="0.5" height="2" fill="#d4d4d4"/><rect x="28" y="112" width="6" height="2" fill="#4ec9b0"/><rect x="34.25" y="112" width="0.5" height="2" fill="#d4d4d4"/><rect x="35" y="112" width="6" height="2" fill="#9cdcfe"/><rect x="41.25" y="112" width="0.5" height="2" fill="#d4d4d4"/><rect x="16" y="114" width="9" height="2" fill="#9cdcfe"/><rect x="26.25" y="114" width="0.5" height="2" fill="#d4d4d4"/><rect x="28" y="114" width="6" height="2" fill="#ce9178"/><rect x="12" y="116" width="2" height="2" fill="#c586c0"/><rect x="15" y="116" width="5" height="2" fill="#4ec9b0"/><rect x="20.25" y="116" width="0.5" height="2" fill="#d4d4d4"/><rect x="21" y="116" width="3" height="2" fill="#9cdcfe"/><rect x="25.25" y="116" width="0.5" height="2" fill="#d4d4d4"/><rect x="26.25" y="116" width="0.5" height="2" fill="#d4d4d4"/><rect x="28" y="116" width="6" height="2" fill="#4ec9b0"/><rect x="34.25" y="116" width="0.5" height="2" fill="#d4d4d4"/><rect x="35" y="116" width="7" height="2" fill="#9cdcfe"/><rect x="42.25" y="116" width="0.5" height="2" fill="#d4d4d4"/><rect x="16" y="118" width="9" height="2" fill="#9cdcfe"/><rect x="26.25" y="118" width="0.5" height="2" fill="#d4d4d4"/><rect x="28" y="118" width="7" height="2" fill="#ce9178"/><rect x="4" y="122" width="2" height="2" fill="#c586c0"/><rect x="7" y="122" width="9" height="2" fill="#9cdcfe"/><rect x="17.25" y="122" width="0.5" height="2" fill="#d4d4d4"/><rect x="18.25" y="122" width="0.5" height="2" fill="#d4d4d4"/><rect x="20" y="122" width="4" height="2" fill="#ce9178"/><rect x="25" y="122" width="3" height="2" fill="#c586c0"/><rect x="29" y="122" width="9" height="2" fill="#9cdcfe"/><rect x="39.25" y="122" width="0.5" height="2" fill="#d4d4d4"/><rect x="40.25" y="122" width="0.5" height="2" fill="#d4d4d4"/><rect x="42" y="122" width="6" height="2" fill="#ce9178"/><rect x="48.25" y="122" width="0.5" height="2" fill="#d4d4d4"/><rect x="8" y="124" width="9" height="2" fill="#9cdcfe"/><rect x="18.25" y="124" width="0.5" height="2" fill="#d4d4d4"/><rect x="20" y="124" width="4" height="2" fill="#ce9178"/><rect x="4" y="126" width="2" height="2" fill="#c586c0"/><rect x="7" y="126" width="9" height="2" fill="#9cdcfe"/><rect x="17.25" y="126" width="0.5" height="2" fill="#d4d4d4"/><rect x="18.25" y="126" width="0.5" height="2" fill="#d4d4d4"/><rect x="20" y="126" width="6" height="2" fill="#ce9178"/><rect x="27" y="126" width="3" height="2" fill="#c586c0"/><rect x="31" y="126" width="9" height="2" fill="#9cdcfe"/><rect x="41.25" y="126" width="0.5" height="2" fill="#d4d4d4"/><rect x="42.25" y="126" width="0.5" height="2" fill="#d4d4d4"/><rect x="44" y="126" width="4" height="2" fill="#ce9178"/><rect x="48.25" y="126" width="0.5" height="2" fill="#d4d4d4"/><rect x="8" y="128" width="9" height="2" fill="#9cdcfe"/><rect x="18.25" y="128" width="0.5" height="2" fill="#d4d4d4"/><rect x="20" y="128" width="6" height="2" fill="#ce9178"/><rect x="4" y="130" width="2" height="2" fill="#c586c0"/><rect x="7" y="130" width="9" height="2" fill="#9cdcfe"/><rect x="17.25" y="130" width="0.5" height="2" fill="#d4d4d4"/><rect x="18.25" y="130" width="0.5" height="2" fill="#d4d4d4"/><rect x="20" y="130" width="6" height="2" fill="#ce9178"/><rect x="27" y="130" width="3" height="2" fill="#c586c0"/><rect x="31" y="130" width="9" height="2" fill="#9cdcfe"/><rect x="41.25" y="130" width="0.5" height="2" fill="#d4d4d4"/><rect x="42.25" y="130" width="0.5" height="2" fill="#d4d4d4"/><rect x="44" y="130" width="7" height="2" fill="#ce9178"/><rect x="51.25" y="130" width="0.5" height="2" fill="#d4d4d4"/><rect x="8" y="132" width="9" height="2" fill="#9cdcfe"/><rect x="18.25" y="132" width="0.5" height="2" fill="#d4d4d4"/><rect x="20" y="132" width="6" height="2" fill="#ce9178"/><rect x="4" y="134" width="2" height="2" fill="#c586c0"/><rect x="7" y="134" width="9" height="2" fill="#9cdcfe"/><rect x="17.25" y="134" width="0.5" height="2" fill="#d4d4d4"/><rect x="18.25" y="134" width="0.5" height="2" fill="#d4d4d4"/><rect x="20" y="134" width="7" height="2" fill="#ce9178"/><rect x="28" y="134" width="3" height="2" fill="#c586c0"/><rect x="32" y="134" width="9" height="2" fill="#9cdcfe"/><rect x="42.25" y="134" width="0.5" height="2" fill="#d4d4d4"/><rect x="43.25" y="134" width="0.5" height="2" fill="#d4d4d4"/><rect x="45" y="134" width="6" height="2" fill="#ce9178"/><rect x="51.25" y="134" width="0.5" height="2" fill="#d4d4d4"/><rect x="8" y="136" width="9" height="2" fill="#9cdcfe"/><rect x="18.25" y="136" width="0.5" height="2" fill="#d4d4d4"/><rect x="20" y="136" width="7" height="2" fill="#ce9178"/><rect x="4" y="140" width="2" height="2" fill="#c586c0"/><rect x="7" y="140" width="9" height="2" fill="#9cdcfe"/><rect x="17.25" y="140" width="0.5" height="2" fill="#d4d4d4"/><rect x="18.25" y="140" width="0.5" height="2" fill="#d4d4d4"/><rect x="20" y="140" width="4" height="2" fill="#ce9178"/><rect x="24.25" y="140" width="0.5" height="2" fill="#d4d4d4"/><rect x="8" y="142" width="14" height="2" fill="#9cdcfe"/><rect x="22.25" y="142" width="0.5" height="2" fill="#d4d4d4"/><rect x="23" y="142" width="1" height="2" fill="#b5cea8"/><rect x="24.25" y="142" width="0.5" height="2" fill="#d4d4d4"/><rect x="26.25" y="142" width="0.5" height="2" fill="#d4d4d4"/><rect x="27.25" y="142" width="0.5" height="2" fill="#d4d4d4"/><rect x="29" y="142" width="2" height="2" fill="#b5cea8"/><rect x="4" y="144" width="2" height="2" fill="#c586c0"/><rect x="7" y="144" width="9" height="2" fill="#9cdcfe"/><rect x="17.25" y="144" width="0.5" height="2" fill="#d4d4d4"/><rect x="18.25" y="144" width="0.5" height="2" fill="#d4d4d4"/><rect x="20" y="144" width="6" height="2" fill="#ce9178"/><rect x="26.25" y="144" width="0.5" height="2" fill="#d4d4d4"/><rect x="8" y="146" width="14" height="2" fill="#9cdcfe"/><rect x="22.25" y="146" width="0.5" height="2" fill="#d4d4d4"/><rect x="23" y="146" width="1" height="2" fill="#b5cea8"/><rect x="24.25" y="146" width="0.5" height="2" fill="#d4d4d4"/><rect x="26.25" y="146" width="0.5" height="2" fill="#d4d4d4"/><rect x="27.25" y="146" width="0.5" height="2" fill="#d4d4d4"/><rect x="29" y="146" width="2" height="2" fill="#b5cea8"/><rect x="4" y="148" width="2" height="2" fill="#c586c0"/><rect x="7" y="148" width="9" height="2" fill="#9cdcfe"/><rect x="17.25" y="148" width="0.5" height="2" fill="#d4d4d4"/><rect x="18.25" y="148" width="0.5" height="2" fill="#d4d4d4"/><rect x="20" y="148" width="6" height="2" fill="#ce9178"/><rect x="26.25" y="148" width="0.5" height="2" fill="#d4d4d4"/><rect x="8" y="150" width="14" height="2" fill="#9cdcfe"/><rect x="22.25" y="150" width="0.5" height="2" fill="#d4d4d4"/><rect x="23" y="150" width="1" height="2" fill="#b5cea8"/><rect x="24.25" y="150" width="0.5" height="2" fill="#d4d4d4"/><rect x="26.25" y="150" width="0.5" height="2" fill="#d4d4d4"/><rect x="27.25" y="150" width="0.5" height="2" fill="#d4d4d4"/><rect x="29" y="150" width="2" height="2" fill="#b5cea8"/><rect x="4" y="152" width="2" height="2" fill="#c586c0"/><rect x="7" y="152" width="9" height="2" fill="#9cdcfe"/><rect x="17.25" y="152" width="0.5" height="2" fill="#d4d4d4"/><rect x="18.25" y="152" width="0.5" height="2" fill="#d4d4d4"/><rect x="20" y="152" width="7" height="2" fill="#ce9178"/><rect x="27.25" y="152" width="0.5" height="2" fill="#d4d4d4"/><rect x="8" y="154" width="14" height="2" fill="#9cdcfe"/><rect x="22.25" y="154" width="0.5" height="2" fill="#d4d4d4"/><rect x="23" y="154" width="1" height="2" fill="#b5cea8"/><rect x="24.25" y="154" width="0.5" height="2" fill="#d4d4d4"/><rect x="26.25" y="154" width="0.5" height="2" fill="#d4d4d4"/><rect x="27.25" y="154" width="0.5" height="2" fill="#d4d4d4"/><rect x="29" y="154" width="2" height="2" fill="#b5cea8"/><rect x="4" y="158" width="10" height="2" fill="#9cdcfe"/><rect x="14.25" y="158" width="0.5" height="2" fill="#d4d4d4"/><rect x="15" y="158" width="6" height="2" fill="#dcdcaa"/><rect x="21.25" y="158" width="0.5" height="2" fill="#d4d4d4"/><rect x="22" y="158" width="1" height="2" fill="#b5cea8"/><rect x="23.25" y="158" width="0.5" height="2" fill="#d4d4d4"/><rect x="25" y="158" width="4" height="2" fill="#dcdcaa"/><rect x="29.25" y="158" width="0.5" height="2" fill="#d4d4d4"/><rect x="30" y="158" width="14" height="2" fill="#9cdcfe"/><rect x="44.25" y="158" width="0.5" height="2" fill="#d4d4d4"/><rect x="45.25" y="158" width="0.5" height="2" fill="#d4d4d4"/><rect x="4" y="160" width="2" height="2" fill="#c586c0"/><rect x="7" y="160" width="14" height="2" fill="#9cdcfe"/><rect x="21.25" y="160" width="0.5" height="2" fill="#d4d4d4"/><rect x="22" y="160" width="1" height="2" fill="#b5cea8"/><rect x="23.25" y="160" width="0.5" height="2" fill="#d4d4d4"/><rect x="25.25" y="160" width="0.5" height="2" fill="#d4d4d4"/><rect x="26.25" y="160" width="0.5" height="2" fill="#d4d4d4"/><rect x="28" y="160" width="14" height="2" fill="#9cdcfe"/><rect x="42.25" y="160" width="0.5" height="2" fill="#d4d4d4"/><rect x="43" y="160" width="1" height="2" fill="#b5cea8"/><rect x="44.25" y="160" width="0.5" height="2" fill="#d4d4d4"/><rect x="46" y="160" width="3" height="2" fill="#c586c0"/><rect x="50" y="160" width="14" height="2" fill="#9cdcfe"/><rect x="64.25" y="160" width="0.5" height="2" fill="#d4d4d4"/><rect x="65" y="160" width="1" height="2" fill="#b5cea8"/><rect x="66.25" y="160" width="0.5" height="2" fill="#d4d4d4"/><rect x="68.25" y="160" width="0.5" height="2" fill="#d4d4d4"/><rect x="69.25" y="160" width="0.5" height="2" fill="#d4d4d4"/><rect x="71" y="160" width="14" height="2" fill="#9cdcfe"/><rect x="85.25" y="160" width="0.5" height="2" fill="#d4d4d4"/><rect x="86" y="160" width="1" height="2" fill="#b5cea8"/><rect x="87.25" y="160" width="0.5" height="2" fill="#d4d4d4"/><rect x="88.25" y="160" width="0.5" height="2" fill="#d4d4d4"/><rect x="8" y="162" width="5" height="2" fill="#9cdcfe"/><rect x="14.25" y="162" width="0.5" height="2" fill="#d4d4d4"/><rect x="15.25" y="162" width="0.5" height="2" fill="#d4d4d4"/><rect x="17" y="162" width="2" height="2" fill="#b5cea8"/><rect x="8" y="164" width="11" height="2" fill="#9cdcfe"/><rect x="20.25" y="164" width="0.5" height="2" fill="#d4d4d4"/><rect x="22" y="164" width="5" height="2" fill="#569cd6"/><rect x="4" y="166" width="4" height="2" fill="#c586c0"/><rect x="8.25" y="166" width="0.5" height="2" fill="#d4d4d4"/><rect x="8" y="168" width="10" height="2" fill="#9cdcfe"/><rect x="18.25" y="168" width="0.5" height="2" fill="#d4d4d4"/><rect x="19" y="168" width="3" height="2" fill="#dcdcaa"/><rect x="22.25" y="168" width="0.5" height="2" fill="#d4d4d4"/><rect x="23.25" y="168" width="0.5" height="2" fill="#d4d4d4"/><rect x="4" y="172" width="2" height="2" fill="#c586c0"/><rect x="7" y="172" width="3" height="2" fill="#c586c0"/><rect x="11" y="172" width="11" height="2" fill="#9cdcfe"/><rect x="22.25" y="172" width="0.5" height="2" fill="#d4d4d4"/><rect x="8" y="174" width="14" height="2" fill="#9cdcfe"/><rect x="23.25" y="174" width="0.5" height="2" fill="#d4d4d4"/><rect x="25.25" y="174" width="0.5" height="2" fill="#d4d4d4"/><rect x="26" y="174" width="6" height="2" fill="#4ec9b0"/><rect x="32.25" y="174" width="0.5" height="2" fill="#d4d4d4"/><rect x="33" y="174" width="9" height="2" fill="#dcdcaa"/><rect x="42.25" y="174" width="0.5" height="2" fill="#d4d4d4"/><rect x="43" y="174" width="1" height="2" fill="#b5cea8"/><rect x="44.25" y="174" width="0.5" height="2" fill="#d4d4d4"/><rect x="46.25" y="174" width="0.5" height="2" fill="#d4d4d4"/><rect x="47" y="174" width="8" height="2" fill="#9cdcfe"/><rect x="55.25" y="174" width="0.5" height="2" fill="#d4d4d4"/><rect x="56.25" y="174" width="0.5" height="2" fill="#d4d4d4"/><rect x="57" y="174" width="2" height="2" fill="#b5cea8"/><rect x="59.25" y="174" width="0.5" height="2" fill="#d4d4d4"/><rect x="60.25" y="174" width="0.5" height="2" fill="#d4d4d4"/><rect x="62.25" y="174" width="0.5" height="2" fill="#d4d4d4"/><rect x="64" y="174" width="2" height="2" fill="#b5cea8"/><rect x="66.25" y="174" width="0.5" height="2" fill="#d4d4d4"/><rect x="26" y="176" width="6" height="2" fill="#4ec9b0"/><rect x="32.25" y="176" width="0.5" height="2" fill="#d4d4d4"/><rect x="33" y="176" width="9" height="2" fill="#dcdcaa"/><rect x="42.25" y="176" width="0.5" height="2" fill="#d4d4d4"/><rect x="43" y="176" width="1" height="2" fill="#b5cea8"/><rect x="44.25" y="176" width="0.5" height="2" fill="#d4d4d4"/><rect x="46.25" y="176" width="0.5" height="2" fill="#d4d4d4"/><rect x="47" y="176" width="8" height="2" fill="#9cdcfe"/><rect x="55.25" y="176" width="0.5" height="2" fill="#d4d4d4"/><rect x="56.25" y="176" width="0.5" height="2" fill="#d4d4d4"/><rect x="57" y="176" width="2" height="2" fill="#b5cea8"/><rect x="59.25" y="176" width="0.5" height="2" fill="#d4d4d4"/><rect x="60.25" y="176" width="0.5" height="2" fill="#d4d4d4"/><rect x="62.25" y="176" width="0.5" height="2" fill="#d4d4d4"/><rect x="64" y="176" width="2" height="2" fill="#b5cea8"/><rect x="66.25" y="176" width="0.5" height="2" fill="#d4d4d4"/><rect x="4" y="180" width="11" height="2" fill="#9cdcfe"/><rect x="16.25" y="180" width="0.5" height="2" fill="#d4d4d4"/><rect x="18" y="180" width="4" height="2" fill="#569cd6"/><rect x="4" y="182" width="11" height="2" fill="#9cdcfe"/><rect x="15.25" y="182" width="0.5" height="2" fill="#d4d4d4"/><rect x="16" y="182" width="4" height="2" fill="#dcdcaa"/><rect x="20.25" y="182" width="0.5" height="2" fill="#d4d4d4"/><rect x="21" y="182" width="5" height="2" fill="#9cdcfe"/><rect x="26.25" y="182" width="0.5" height="2" fill="#d4d4d4"/><rect x="4" y="186" width="3" height="2" fill="#c586c0"/><rect x="8" y="186" width="3" height="2" fill="#9cdcfe"/><rect x="12" y="186" width="2" height="2" fill="#c586c0"/><rect x="15" y="186" width="10" height="2" fill="#9cdcfe"/><rect x="25.25" y="186" width="0.5" height="2" fill="#d4d4d4"/><rect x="8" y="188" width="6" height="2" fill="#4ec9b0"/><rect x="14.25" y="188" width="0.5" height="2" fill="#d4d4d4"/><rect x="15" y="188" width="4" height="2" fill="#4ec9b0"/><rect x="19.25" y="188" width="0.5" height="2" fill="#d4d4d4"/><rect x="20" y="188" width="4" height="2" fill="#dcdcaa"/><rect x="24.25" y="188" width="0.5" height="2" fill="#d4d4d4"/><rect x="25" y="188" width="11" height="2" fill="#9cdcfe"/><rect x="36.25" y="188" width="0.5" height="2" fill="#d4d4d4"/><rect x="38" y="188" width="5" height="2" fill="#9cdcfe"/><rect x="43.25" y="188" width="0.5" height="2" fill="#d4d4d4"/><rect x="45" y="188" width="6" height="2" fill="#4ec9b0"/><rect x="51.25" y="188" width="0.5" height="2" fill="#d4d4d4"/><rect x="52" y="188" width="4" height="2" fill="#4ec9b0"/><rect x="56.25" y="188" width="0.5" height="2" fill="#d4d4d4"/><rect x="57" y="188" width="3" height="2" fill="#9cdcfe"/><rect x="60.25" y="188" width="0.5" height="2" fill="#d4d4d4"/><rect x="61" y="188" width="1" height="2" fill="#b5cea8"/><rect x="62.25" y="188" width="0.5" height="2" fill="#d4d4d4"/><rect x="63.25" y="188" width="0.5" height="2" fill="#d4d4d4"/><rect x="65" y="188" width="3" height="2" fill="#9cdcfe"/><rect x="68.25" y="188" width="0.5" height="2" fill="#d4d4d4"/><rect x="69" y="188" width="1" height="2" fill="#b5cea8"/><rect x="70.25" y="188" width="0.5" height="2" fill="#d4d4d4"/><rect x="71.25" y="188" width="0.5" height="2" fill="#d4d4d4"/><rect x="73" y="188" width="2" height="2" fill="#b5cea8"/><rect x="75.25" y="188" width="0.5" height="2" fill="#d4d4d4"/><rect x="77" y="188" width="2" height="2" fill="#b5cea8"/><rect x="79.25" y="188" width="0.5" height="2" fill="#d4d4d4"/><rect x="80.25" y="188" width="0.5" height="2" fill="#d4d4d4"/><rect x="4" y="190" width="6" height="2" fill="#4ec9b0"/><rect x="10.25" y="190" width="0.5" height="2" fill="#d4d4d4"/><rect x="11" y="190" width="4" height="2" fill="#4ec9b0"/><rect x="15.25" y="190" width="0.5" height="2" fill="#d4d4d4"/><rect x="16" y="190" width="4" height="2" fill="#dcdcaa"/><rect x="20.25" y="190" width="0.5" height="2" fill="#d4d4d4"/><rect x="21" y="190" width="11" height="2" fill="#9cdcfe"/><rect x="32.25" y="190" width="0.5" height="2" fill="#d4d4d4"/><rect x="34" y="190" width="5" height="2" fill="#9cdcfe"/><rect x="39.25" y="190" width="0.5" height="2" fill="#d4d4d4"/><rect x="41" y="190" width="6" height="2" fill="#4ec9b0"/><rect x="47.25" y="190" width="0.5" height="2" fill="#d4d4d4"/><rect x="48" y="190" width="4" height="2" fill="#4ec9b0"/><rect x="52.25" y="190" width="0.5" height="2" fill="#d4d4d4"/><rect x="53" y="190" width="14" height="2" fill="#9cdcfe"/><rect x="67.25" y="190" width="0.5" height="2" fill="#d4d4d4"/><rect x="68" y="190" width="1" height="2" fill="#b5cea8"/><rect x="69.25" y="190" width="0.5" height="2" fill="#d4d4d4"/><rect x="70.25" y="190" width="0.5" height="2" fill="#d4d4d4"/><rect x="72" y="190" width="14" height="2" fill="#9cdcfe"/><rect x="86.25" y="190" width="0.5" height="2" fill="#d4d4d4"/><rect x="87" y="190" width="1" height="2" fill="#b5cea8"/><rect x="88.25" y="190" width="0.5" height="2" fill="#d4d4d4"/><rect x="89.25" y="190" width="0.5" height="2" fill="#d4d4d4"/><rect x="91" y="190" width="2" height="2" fill="#b5cea8"/><rect x="93.25" y="190" width="0.5" height="2" fill="#d4d4d4"/><rect x="95" y="190" width="2" height="2" fill="#b5cea8"/><rect x="97.25" y="190" width="0.5" height="2" fill="#d4d4d4"/><rect x="98.25" y="190" width="0.5" height="2" fill="#d4d4d4"/><rect x="4" y="194" width="2" height="2" fill="#c586c0"/><rect x="7" y="194" width="14" height="2" fill="#9cdcfe"/><rect x="21.25" y="194" width="0.5" height="2" fill="#d4d4d4"/><rect x="22" y="194" width="1" height="2" fill="#b5cea8"/><rect x="23.25" y="194" width="0.5" height="2" fill="#d4d4d4"/><rect x="25.25" y="194" width="0.5" height="2" fill="#d4d4d4"/><rect x="27" y="194" width="1" height="2" fill="#b5cea8"/><rect x="29" y="194" width="2" height="2" fill="#c586c0"/><rect x="32" y="194" width="14" height="2" fill="#9cdcfe"/><rect x="46.25" y="194" width="0.5" height="2" fill="#d4d4d4"/><rect x="47" y="194" width="1" height="2" fill="#b5cea8"/><rect x="48.25" y="194" width="0.5" height="2" fill="#d4d4d4"/><rect x="50.25" y="194" width="0.5" height="2" fill="#d4d4d4"/><rect x="52" y="194" width="8" height="2" fill="#9cdcfe"/><rect x="60.25" y="194" width="0.5" height="2" fill="#d4d4d4"/><rect x="61" y="194" width="2" height="2" fill="#b5cea8"/><rect x="63.25" y="194" width="0.5" height="2" fill="#d4d4d4"/><rect x="8" y="196" width="9" height="2" fill="#dcdcaa"/><rect x="17.25" y="196" width="0.5" height="2" fill="#d4d4d4"/><rect x="18.25" y="196" width="0.5" height="2" fill="#d4d4d4"/><rect x="4" y="198" width="2" height="2" fill="#c586c0"/><rect x="7" y="198" width="14" height="2" fill="#9cdcfe"/><rect x="21.25" y="198" width="0.5" height="2" fill="#d4d4d4"/><rect x="22" y="198" width="1" height="2" fill="#b5cea8"/><rect x="23.25" y="198" width="0.5" height="2" fill="#d4d4d4"/><rect x="25.25" y="198" width="0.5" height="2" fill="#d4d4d4"/><rect x="27" y="198" width="1" height="2" fill="#b5cea8"/><rect x="29" y="198" width="2" height="2" fill="#c586c0"/><rect x="32" y="198" width="14" height="2" fill="#9cdcfe"/><rect x="46.25" y="198" width="0.5" height="2" fill="#d4d4d4"/><rect x="47" y="198" width="1" height="2" fill="#b5cea8"/><rect x="48.25" y="198" width="0.5" height="2" fill="#d4d4d4"/><rect x="50.25" y="198" width="0.5" height="2" fill="#d4d4d4"/><rect x="52" y="198" width="8" height="2" fill="#9cdcfe"/><rect x="60.25" y="198" width="0.5" height="2" fill="#d4d4d4"/><rect x="61" y="198" width="2" height="2" fill="#b5cea8"/><rect x="63.25" y="198" width="0.5" height="2" fill="#d4d4d4"/><rect x="8" y="200" width="9" height="2" fill="#dcdcaa"/><rect x="17.25" y="200" width="0.5" height="2" fill="#d4d4d4"/><rect x="18.25" y="200" width="0.5" height="2" fill="#d4d4d4"/><rect x="4" y="204" width="3" height="2" fill="#c586c0"/><rect x="8" y="204" width="5" height="2" fill="#9cdcfe"/><rect x="14" y="204" width="2" height="2" fill="#c586c0"/><rect x="17" y="204" width="10" height="2" fill="#9cdcfe"/><rect x="27.25" y="204" width="0.5" height="2" fill="#d4d4d4"/><rect x="28" y="204" width="1" height="2" fill="#b5cea8"/><rect x="29.25" y="204" width="0.5" height="2" fill="#d4d4d4"/><rect x="30.25" y="204" width="0.5" height="2" fill="#d4d4d4"/><rect x="31.25" y="204" width="0.5" height="2" fill="#d4d4d4"/><rect x="8" y="206" width="2" height="2" fill="#c586c0"/><rect x="11" y="206" width="14" height="2" fill="#9cdcfe"/><rect x="25.25" y="206" width="0.5" height="2" fill="#d4d4d4"/><rect x="26" y="206" width="1" height="2" fill="#b5cea8"/><rect x="27.25" y="206" width="0.5" height="2" fill="#d4d4d4"/><rect x="29.25" y="206" width="0.5" height="2" fill="#d4d4d4"/><rect x="30.25" y="206" width="0.5" height="2" fill="#d4d4d4"/><rect x="32" y="206" width="5" height="2" fill="#9cdcfe"/><rect x="37.25" y="206" width="0.5" height="2" fill="#d4d4d4"/><rect x="38" y="206" width="1" height="2" fill="#b5cea8"/><rect x="39.25" y="206" width="0.5" height="2" fill="#d4d4d4"/><rect x="41" y="206" width="3" height="2" fill="#c586c0"/><rect x="45" y="206" width="14" height="2" fill="#9cdcfe"/><rect x="59.25" y="206" width="0.5" height="2" fill="#d4d4d4"/><rect x="60" y="206" width="1" height="2" fill="#b5cea8"/><rect x="61.25" y="206" width="0.5" height="2" fill="#d4d4d4"/><rect x="63.25" y="206" width="0.5" height="2" fill="#d4d4d4"/><rect x="64.25" y="206" width="0.5" height="2" fill="#d4d4d4"/><rect x="66" y="206" width="5" height="2" fill="#9cdcfe"/><rect x="71.25" y="206" width="0.5" height="2" fill="#d4d4d4"/><rect x="72" y="206" width="1" height="2" fill="#b5cea8"/><rect x="73.25" y="206" width="0.5" height="2" fill="#d4d4d4"/><rect x="74.25" y="206" width="0.5" height="2" fill="#d4d4d4"/><rect x="12" y="208" width="9" height="2" fill="#dcdcaa"/><rect x="21.25" y="208" width="0.5" height="2" fill="#d4d4d4"/><rect x="22.25" y="208" width="0.5" height="2" fill="#d4d4d4"/><rect x="4" y="212" width="10" height="2" fill="#dcdcaa"/><rect x="14.25" y="212" width="0.5" height="2" fill="#d4d4d4"/><rect x="15" y="212" width="1" height="2" fill="#b5cea8"/><rect x="16.25" y="212" width="0.5" height="2" fill="#d4d4d4"/><rect x="18" y="212" width="5" height="2" fill="#9cdcfe"/><rect x="23.25" y="212" width="0.5" height="2" fill="#d4d4d4"/><rect x="25" y="212" width="17" height="2" fill="#ce9178"/><rect x="42.25" y="212" width="0.5" height="2" fill="#d4d4d4"/><rect x="44" y="212" width="2" height="2" fill="#b5cea8"/><rect x="46.25" y="212" width="0.5" height="2" fill="#d4d4d4"/><rect x="4" y="214" width="6" height="2" fill="#4ec9b0"/><rect x="10.25" y="214" width="0.5" height="2" fill="#d4d4d4"/><rect x="11" y="214" width="7" height="2" fill="#4ec9b0"/><rect x="18.25" y="214" width="0.5" height="2" fill="#d4d4d4"/><rect x="19" y="214" width="6" height="2" fill="#dcdcaa"/><rect x="25.25" y="214" width="0.5" height="2" fill="#d4d4d4"/><rect x="26.25" y="214" width="0.5" height="2" fill="#d4d4d4"/><rect x="4" y="216" width="3" height="2" fill="#9cdcfe"/><rect x="7.25" y="216" width="0.5" height="2" fill="#d4d4d4"/><rect x="8" y="216" width="4" height="2" fill="#dcdcaa"/><rect x="12.25" y="216" width="0.5" height="2" fill="#d4d4d4"/><rect x="13" y="216" width="11" height="2" fill="#9cdcfe"/><rect x="24.25" y="216" width="0.5" height="2" fill="#d4d4d4"/></svg></div>

<!-- scrollbar -->
<div class="abs" style="left:1297.5px;top:112px;width:1.5px;height:582px;background:#151414"></div>
<div class="abs" style="left:1299px;top:112px;width:13px;height:1.5px;background:#b8b8b8"></div>

<!-- status bar -->
<div class="abs" style="left:5px;top:693px;width:1307px;height:21px;background:#201f1f;border-top:2px solid #252323"></div>
<div class="abs" style="left:0;top:713px;width:1316px;height:3px;background:#202126"></div><div class="abs" style="left:0;top:716px;width:1316px;height:3px;background:#26292c"></div><div class="abs" style="left:0;top:719px;width:1316px;height:1px;background:#121317"></div>
<div class="abs" style="left:5px;top:694.5px;width:33px;height:20px;background:#0b7be0"></div>
<svg class="abs" style="left:14px;top:697px" width="16" height="16" viewBox="0 0 16 16" fill="none" stroke="#9ad4ff" stroke-width="1.5" stroke-linecap="round">
<path d="M3.1 5.1 L6.8 8.8 L3.1 12.6"/><path d="M11 1.9 L7.7 5.1 L11 8.6"/>
</svg>
<svg class="abs" style="left:44px;top:697px" width="100" height="16" viewBox="0 0 100 16" fill="none" stroke="#b4b4b4" stroke-width="1.2">
<circle cx="8.2" cy="7.6" r="5.7"/><path d="M5.9 5.3 L10.5 9.9 M10.5 5.3 L5.9 9.9"/>
<path d="M33.2 1.8 L39.4 12.6 H27.2 Z" stroke-linejoin="round"/><path d="M33.2 6 V9.2 M33.2 10.6 V11.4"/>
<path d="M68.6 13 L72 4.8 L75.4 13 M69.6 10.6 H74.4"/><circle cx="72" cy="4.2" r="0.9"/>
<path d="M69.2 1.8 C68 3 68 5.5 69.2 6.7 M67.4 1 C65.6 2.8 65.6 5.8 67.4 7.5 M74.8 1.8 C76 3 76 5.5 74.8 6.7 M76.6 1 C78.4 2.8 78.4 5.8 76.6 7.5"/>
</svg>
<div class="st" style="left:61.5px">0</div>
<div class="st" style="left:87px">0</div>
<div class="st" style="left:125px">0</div>
<div class="st" style="left:924px;font-size:11.2px">Ln 1, Col 1</div>
<div class="st" style="left:993px;font-size:10.8px">Spaces: 4</div>
<div class="st" style="left:1057px;font-size:11.2px">UTF-8</div>
<div class="st" style="left:1105px;font-size:11.2px">LF</div>
<svg class="abs" style="left:1132px;top:697.5px" width="16" height="16" viewBox="0 0 16 16" fill="none" stroke="#b8b8b8" stroke-width="1.2">
<path d="M5.5 1.5 C4 1.5 3.6 2.5 3.6 4 V5.8 C3.6 6.8 3 7.3 2.3 7.5 C3 7.7 3.6 8.2 3.6 9.2 V11 C3.6 12.5 4 13.5 5.5 13.5"/>
<path d="M9.2 1.5 C10.6 1.5 11 2.5 11 4 V8.6"/><circle cx="11.4" cy="11.3" r="2.3" fill="#dcdcdc" stroke="none"/>
</svg>
<div class="st" style="left:1151px;font-size:11.6px">Python</div>
<div class="st" style="left:1200px;font-size:12.1px">3.11.6 64-bit</div>
<svg class="abs" style="left:1282px;top:696px" width="16" height="16" viewBox="0 0 16 16" fill="none" stroke="#b8b8b8" stroke-width="1.3">
<path d="M4 12 V7.5 C4 4.8 5.8 3 8 3 C10.2 3 12 4.8 12 7.5 V12 L13.5 13.5 H2.5 Z" stroke-linejoin="round"/><path d="M6.5 14.5 H9.5"/>
</svg>
<div class="abs" style="left:0;top:2px;width:1.5px;height:3px;background:#b8bcc0"></div>
<!-- mouse cursor -->
<svg class="abs" style="left:394px;top:46px" width="16" height="24" viewBox="0 0 16 24">
<path d="M1.5 1.5 L1.7 17.5 L4.6 14.4 L7.4 20.6 L10.2 19.4 L7.5 13.2 L12 12.6 Z" fill="#0a0a0a" stroke="#e6e6e6" stroke-width="1.3" stroke-linejoin="round"/>
</svg>
</body></html>
